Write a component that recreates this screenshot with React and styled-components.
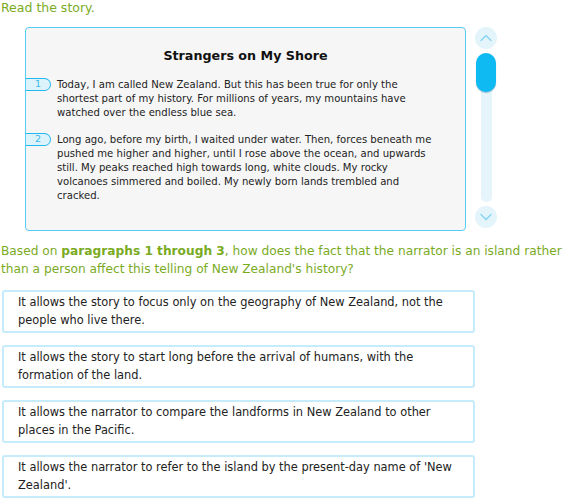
import React from 'react';
import styled, { createGlobalStyle } from 'styled-components';

const GlobalStyle = createGlobalStyle`
  html, body {
    margin: 0;
    padding: 0;
    background: #fff;
  }
  body {
    font-family: "DejaVu Sans", Verdana, sans-serif;
    color: #222;
  }
`;

const paragraphs = [
  'Today, I am called New Zealand. But this has been true for only the shortest part of my history. For millions of years, my mountains have watched over the endless blue sea.',
  'Long ago, before my birth, I waited under water. Then, forces beneath me pushed me higher and higher, until I rose above the ocean, and upwards still. My peaks reached high towards long, white clouds. My rocky volcanoes simmered and boiled. My newly born lands trembled and cracked.',
  'Millions of years passed.',
];

const choices = [
  'It allows the story to focus only on the geography of New Zealand, not the people who live there.',
  'It allows the story to start long before the arrival of humans, with the formation of the land.',
  'It allows the narrator to compare the landforms in New Zealand to other places in the Pacific.',
  "It allows the narrator to refer to the island by the present-day name of 'New Zealand'.",
];

function Chevron({ down }) {
  return (
    <svg width="12" height="8" viewBox="0 0 12 8">
      <path
        d={down ? 'M1 1.5 L6 6.5 L11 1.5' : 'M1 6.5 L6 1.5 L11 6.5'}
        fill="none"
        stroke="#86d3f2"
        strokeWidth="1.4"
        strokeLinecap="round"
        strokeLinejoin="round"
      />
    </svg>
  );
}

export default function App() {
  return (
    <Page>
      <GlobalStyle />
      <Prompt>Read the story.</Prompt>
      <Reader>
        <StoryBox>
          <StoryScroll>
            <Title>Strangers on My Shore</Title>
            {paragraphs.map((p, i) => (
              <Paragraph key={i}>
                <Badge>{i + 1}</Badge>
                <ParaText>{p}</ParaText>
              </Paragraph>
            ))}
          </StoryScroll>
        </StoryBox>
        <Scrollbar>
          <ScrollButton><Chevron /></ScrollButton>
          <Track>
            <Thumb />
          </Track>
          <ScrollButton><Chevron down /></ScrollButton>
        </Scrollbar>
      </Reader>
      <Question>
        Based on <b>paragraphs 1 through 3</b>, how does the fact that the narrator is an island rather
        than a person affect this telling of New Zealand's history?
      </Question>
      <Choices>
        {choices.map((c) => (
          <Choice key={c}>{c}</Choice>
        ))}
      </Choices>
    </Page>
  );
}

const Page = styled.div`
  width: 564px;
  height: 500px;
  overflow: hidden;
  display: flex;
  flex-direction: column;
`;

const Prompt = styled.div`
  color: #7aab1f;
  font-size: 12.5px;
  line-height: 16px;
  padding: 0 0 0 1px;
`;

const Reader = styled.div`
  display: flex;
  align-items: flex-start;
  gap: 9px;
  margin: 11px 0 0 25px;
`;

const StoryBox = styled.div`
  width: 441px;
  height: 204px;
  border: 1px solid #57cbf4;
  border-radius: 4px;
  background: #f6f6f6;
  padding-bottom: 15px;
  box-sizing: border-box;
  display: flex;
`;

const StoryScroll = styled.div`
  flex: 1;
  overflow: hidden;
  padding-top: 20px;
`;

const Title = styled.div`
  text-align: center;
  font-weight: bold;
  font-size: 12.7px;
  line-height: 16px;
  color: #111;
  margin-bottom: 14px;
`;

const Paragraph = styled.div`
  display: flex;
  align-items: flex-start;
  gap: 6px;
  margin-bottom: 13px;
`;

const Badge = styled.div`
  flex: none;
  width: 25px;
  height: 13px;
  box-sizing: border-box;
  border: 1.5px solid #22b8f0;
  border-left: none;
  border-radius: 0 7px 7px 0;
  background: #dcf3fc;
  color: #3cb8ea;
  font-size: 9.5px;
  line-height: 10px;
  text-align: center;
`;

const ParaText = styled.div`
  width: 377px;
  font-size: 10.1px;
  line-height: 14px;
  color: #222;
`;

const Scrollbar = styled.div`
  width: 22px;
  display: flex;
  flex-direction: column;
  align-items: center;
`;

const ScrollButton = styled.div`
  width: 22px;
  height: 22px;
  border-radius: 50%;
  background: #e4f4fb;
  display: flex;
  align-items: center;
  justify-content: center;
`;

const Track = styled.div`
  width: 11px;
  height: 149px;
  margin: 4px 0;
  background: #e6f4fb;
  border-radius: 6px;
  display: flex;
  justify-content: center;
`;

const Thumb = styled.div`
  width: 20px;
  height: 39px;
  flex: none;
  border-radius: 10px;
  background: #0fb9f2;
  box-shadow: 0 1px 1px rgba(0, 80, 120, 0.35);
`;

const Question = styled.div`
  margin-top: 11px;
  padding-left: 1px;
  color: #7aab1f;
  font-size: 12.2px;
  line-height: 18px;

  b {
    font-weight: bold;
  }
`;

const Choices = styled.div`
  display: flex;
  flex-direction: column;
  gap: 12px;
  margin: 12px 0 0 2px;
`;

const Choice = styled.div`
  width: 473px;
  box-sizing: border-box;
  border: 2px solid #c6ebfa;
  border-radius: 3px;
  padding: 1px 14px 2px 14px;
  font-size: 11.4px;
  line-height: 18px;
  color: #222;
`;
